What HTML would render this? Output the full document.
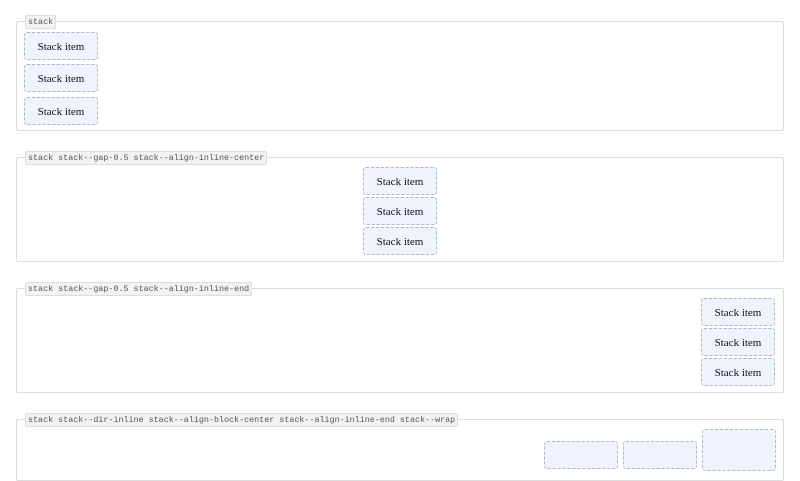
<!DOCTYPE html>
<html><head><style>
html,body{margin:0;width:800px;height:450px;overflow:hidden;background:#fff;font-family:"Liberation Serif",serif;}
.f{position:absolute;left:16px;width:766px;border:1px solid #ddd;border-radius:2px;}
.lg{position:absolute;left:8px;top:-7px;font:8.4px "Liberation Mono",monospace;color:#555;background:#f2f2f2;border:1px solid #ddd;border-radius:2px;padding:0 2px;line-height:12px;}
.it{position:absolute;width:72px;height:26px;border:1px dashed #aeb6cc;border-radius:3px;background:#eef3fe;font-size:11px;display:flex;align-items:center;justify-content:center;color:#111;padding-top:1px;box-sizing:content-box;height:25px;}
</style></head><body>
<div class="f" style="top:21px;height:108px"><span class="lg">stack</span></div>
<div class="it" style="left:24px;top:32px">Stack item</div>
<div class="it" style="left:24px;top:64px">Stack item</div>
<div class="it" style="left:24px;top:97px">Stack item</div>

<div class="f" style="top:157px;height:103px"><span class="lg">stack stack--gap-0.5 stack--align-inline-center</span></div>
<div class="it" style="left:363px;top:167px">Stack item</div>
<div class="it" style="left:363px;top:197px">Stack item</div>
<div class="it" style="left:363px;top:227px">Stack item</div>

<div class="f" style="top:288px;height:103px"><span class="lg">stack stack--gap-0.5 stack--align-inline-end</span></div>
<div class="it" style="left:701px;top:298px">Stack item</div>
<div class="it" style="left:701px;top:328px">Stack item</div>
<div class="it" style="left:701px;top:358px">Stack item</div>

<div class="f" style="top:419px;height:60px"><span class="lg">stack stack--dir-inline stack--align-block-center stack--align-inline-end stack--wrap</span></div>
<div class="it" style="left:544px;top:441px"></div>
<div class="it" style="left:623px;top:441px"></div>
<div class="it" style="left:702px;top:429px;height:39px"></div>
</body></html>
